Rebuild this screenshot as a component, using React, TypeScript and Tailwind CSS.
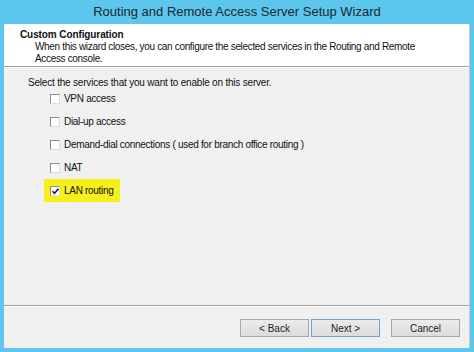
import React from "react";

function Box({ checked }: { checked?: boolean }) {
  return (
    <div className="relative w-[10px] h-[10px] bg-white border-t border-l border-t-[#8c8c8c] border-l-[#8c8c8c] border-r border-b border-r-[#dcdcdc] border-b-[#dcdcdc] shrink-0">
      {checked && (
        <svg className="absolute left-[0px] top-[0px]" width="9" height="9" viewBox="0 0 9 9">
          <path d="M1.5 4.2 L3.5 6.3 L7.5 1.8" stroke="#111" strokeWidth="1.5" fill="none" />
        </svg>
      )}
    </div>
  );
}

function Row({ label, checked, highlight }: { label: string; checked?: boolean; highlight?: boolean }) {
  return (
    <div className="h-[23px] flex items-center pl-[22px]">
      <div className={highlight ? "flex items-center gap-[4px] bg-[#f5f01c] h-[23px] pl-[6px] pr-[6px] -ml-[6px]" : "flex items-center gap-[4px]"}>
        <Box checked={checked} />
        <span className="text-[10px] tracking-[-0.3px] text-[#111] leading-none">{label}</span>
      </div>
    </div>
  );
}

function Btn({ label, def }: { label: string; def?: boolean }) {
  return (
    <div
      className={
        "w-[69px] h-[18px] flex items-center justify-center text-[10px] text-[#222] bg-gradient-to-b from-[#ececec] to-[#dcdcdc] border " +
        (def ? "border-[#6fa2cf]" : "border-[#a8a8a8]")
      }
    >
      {label}
    </div>
  );
}

export default function App() {
  return (
    <div
      className="w-[474px] h-[352px] bg-[#5cc6ec] flex flex-col"
      style={{ fontFamily: '"Liberation Sans", Arial, sans-serif' }}
    >
      <div className="h-[24px] flex items-center justify-center text-[13px] text-[#1c2733]">
        Routing and Remote Access Server Setup Wizard
      </div>
      <div className="flex-1 mx-[4px] mb-[4px] flex flex-col bg-[#f0f0f0] border-r border-r-[#c8c8c8]">
        <div className="h-[42px] bg-white pl-[16px] pt-[5px]">
          <div className="text-[10px] font-bold tracking-[-0.1px] text-[#111] leading-[12px]">Custom Configuration</div>
          <div className="pl-[15px] text-[10px] tracking-[-0.33px] text-[#111] leading-[12px]">
            When this wizard closes, you can configure the selected services in the Routing and Remote
            <br />
            Access console.
          </div>
        </div>
        <div className="h-[1px] bg-[#a0a0a0]" />
        <div className="h-[1px] bg-white" />
        <div className="flex-1 pl-[24px] pt-[9px]">
          <div className="text-[10px] tracking-[-0.2px] text-[#111] leading-[12px] -mb-[2px]">
            Select the services that you want to enable on this server.
          </div>
          <Row label="VPN access" />
          <Row label="Dial-up access" />
          <Row label="Demand-dial connections ( used for branch office routing )" />
          <Row label="NAT" />
          <Row label="LAN routing" checked highlight />
        </div>
        <div className="h-[1px] bg-[#a0a0a0]" />
        <div className="h-[1px] bg-white" />
        <div className="h-[41px] flex items-start justify-end pt-[12px] pr-[9px]">
          <div className="flex gap-[2px]">
            <Btn label="< Back" />
            <Btn label="Next >" def />
          </div>
          <div className="ml-[11px]">
            <Btn label="Cancel" />
          </div>
        </div>
      </div>
    </div>
  );
}
